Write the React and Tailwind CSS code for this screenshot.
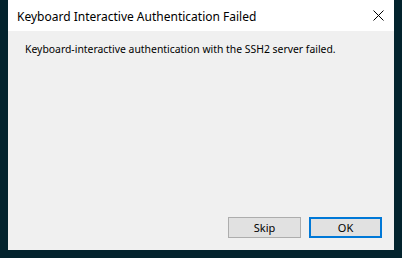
export default function App() {
  return (
    <div className="w-[402px] h-[258px] bg-[#03232d] px-[8px] pb-[8px]" style={{ fontFamily: '"Noto Sans", sans-serif' }}>
      <div className="h-[250px] w-[386px] bg-[#f0f0f0] flex flex-col">
        <div className="h-[31px] bg-white flex items-center justify-between pl-[9px] pr-[10px]">
          <span className="text-[12px] leading-[17px] mt-[1px] text-black whitespace-nowrap">Keyboard Interactive Authentication Failed</span>
          <svg width="11" height="11" viewBox="0 0 11 11">
            <path d="M0.5 0.5 L10.5 10.5 M10.5 0.5 L0.5 10.5" stroke="#000" strokeWidth="1" />
          </svg>
        </div>
        <div className="flex-1 flex flex-col">
          <p className="text-[10.4px] leading-[14px] text-black pl-[17px] pt-[11px] whitespace-nowrap">
            Keyboard-interactive authentication with the SSH2 server failed.
          </p>
          <div className="flex-1" />
          <div className="flex justify-end gap-[8px] pr-[12px] pb-[12px]">
            <button className="w-[73px] h-[21px] bg-[#e1e1e1] border border-[#adadad] text-[11px] leading-none text-black">Skip</button>
            <button className="w-[73px] h-[21px] bg-[#e1e1e1] border-2 border-[#0078d7] text-[11px] leading-none text-black">OK</button>
          </div>
        </div>
      </div>
    </div>
  );
}
